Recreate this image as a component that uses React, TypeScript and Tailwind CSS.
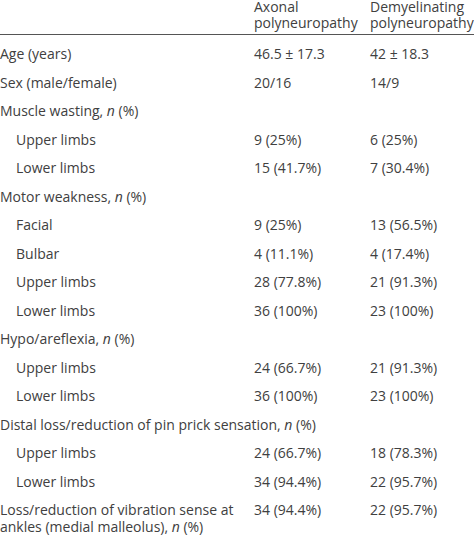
import { ReactNode } from "react";

type Row =
  | { kind: "head"; label: ReactNode }
  | { kind: "data"; label: ReactNode; a: string; b: string; indent?: boolean };

const N = () => <i>n</i>;

const rows: Row[] = [
  { kind: "data", label: "Age (years)", a: "46.5 ± 17.3", b: "42 ± 18.3" },
  { kind: "data", label: "Sex (male/female)", a: "20/16", b: "14/9" },
  { kind: "head", label: <>Muscle wasting, <N /> (%)</> },
  { kind: "data", label: "Upper limbs", a: "9 (25%)", b: "6 (25%)", indent: true },
  { kind: "data", label: "Lower limbs", a: "15 (41.7%)", b: "7 (30.4%)", indent: true },
  { kind: "head", label: <>Motor weakness, <N /> (%)</> },
  { kind: "data", label: "Facial", a: "9 (25%)", b: "13 (56.5%)", indent: true },
  { kind: "data", label: "Bulbar", a: "4 (11.1%)", b: "4 (17.4%)", indent: true },
  { kind: "data", label: "Upper limbs", a: "28 (77.8%)", b: "21 (91.3%)", indent: true },
  { kind: "data", label: "Lower limbs", a: "36 (100%)", b: "23 (100%)", indent: true },
  { kind: "head", label: <>Hypo/areflexia, <N /> (%)</> },
  { kind: "data", label: "Upper limbs", a: "24 (66.7%)", b: "21 (91.3%)", indent: true },
  { kind: "data", label: "Lower limbs", a: "36 (100%)", b: "23 (100%)", indent: true },
  { kind: "head", label: <>Distal loss/reduction of pin prick sensation, <N /> (%)</> },
  { kind: "data", label: "Upper limbs", a: "24 (66.7%)", b: "18 (78.3%)", indent: true },
  { kind: "data", label: "Lower limbs", a: "34 (94.4%)", b: "22 (95.7%)", indent: true },
  {
    kind: "data",
    label: <>Loss/reduction of vibration sense at ankles (medial malleolus), <N /> (%)</>,
    a: "34 (94.4%)",
    b: "22 (95.7%)",
  },
];

const cell = "pt-[6px] pb-[5.5px]";

export default function App() {
  return (
    <div
      className="w-[474px] h-[541px] overflow-hidden bg-white text-[#404040] text-[14px] leading-[17px]"
      style={{ fontFamily: '"Open Sans", "Noto Sans", sans-serif' }}
    >
      {/* header */}
      <div className="grid grid-cols-[254px_116px_1fr] leading-[16px] pb-[3px] -mt-[1px] border-b border-[#555] whitespace-nowrap">
        <div />
        <div>
          Axonal
          <br />
          polyneuropathy
        </div>
        <div>
          Demyelinating
          <br />
          polyneuropathy
        </div>
      </div>

      {/* body */}
      <div className="grid grid-cols-[254px_116px_1fr] mt-[4px]">
        {rows.map((r, i) =>
          r.kind === "head" ? (
            <div key={i} className={`col-span-3 whitespace-nowrap ${cell}`}>
              {r.label}
            </div>
          ) : (
            <div key={i} className="contents">
              <div className={`pr-[14px] ${cell} ${r.indent ? "pl-[16px]" : ""}`}>{r.label}</div>
              <div className={`whitespace-nowrap ${cell}`}>{r.a}</div>
              <div className={`whitespace-nowrap ${cell}`}>{r.b}</div>
            </div>
          )
        )}
      </div>
    </div>
  );
}
